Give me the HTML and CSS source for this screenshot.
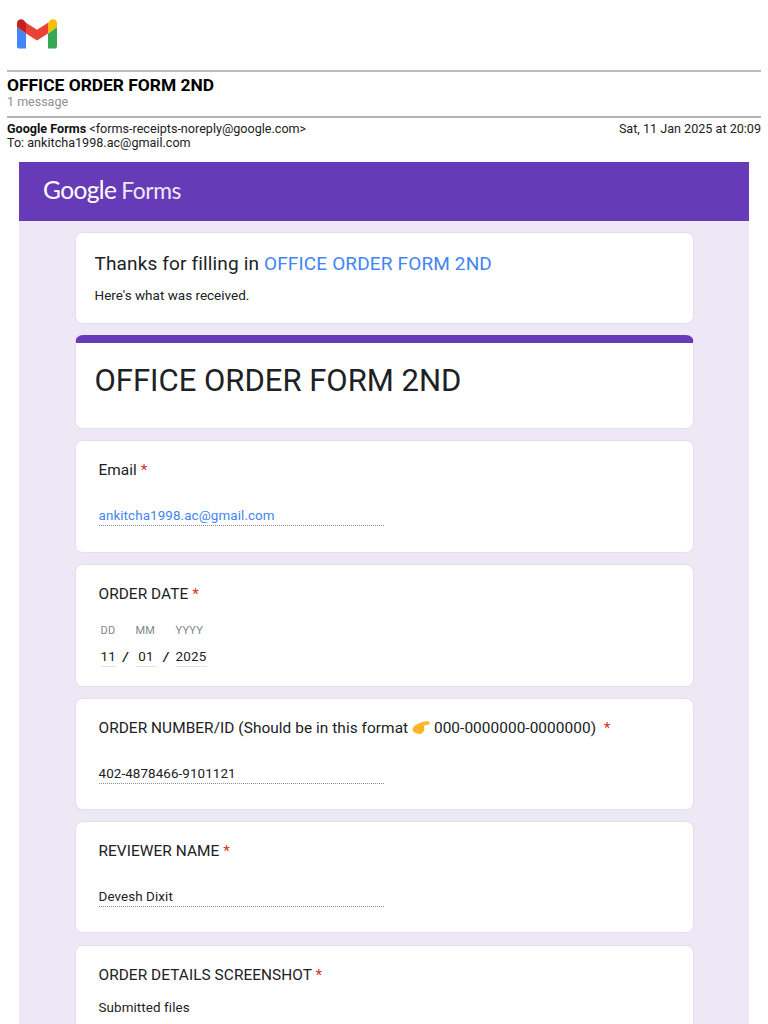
FILE: index.html
```html
<!DOCTYPE html>
<html lang="en">
<head>
<meta charset="utf-8">
<title>OFFICE ORDER FORM 2ND</title>
<link rel="stylesheet" href="styles.css">
</head>
<body>
<header class="mail-head">
  <svg class="gmail" viewBox="0 0 40 30" width="40" height="30" aria-hidden="true">
    <path fill="#4285f4" d="M0 8v19a2.6 2.6 0 0 0 2.6 2.6H9V14.500z"/>
    <path fill="#34a853" d="M31 14.500v15.100h6.400A2.600 2.600 0 0 0 40 27V8z"/>
    <path fill="#fbbc04" d="M31 3.800v10.700l9-6.500V4.200C40 .8 36.200-1 33.500 1z"/>
    <path fill="#ea4335" d="M9 14.500V3.800l11 7L31 3.800v10.700l-11 7z"/>
    <path fill="#c5221f" d="M0 4.200V8l9 6.500V3.800L6.500 1C3.800-1 0 .8 0 4.200z"/>
  </svg>
  <hr class="rule">
  <h1 class="subject">OFFICE ORDER FORM 2ND</h1>
  <div class="count">1 message</div>
  <hr class="rule rule-thin">
  <div class="meta">
    <div><b>Google Forms</b> &lt;forms-receipts-noreply@google.com&gt;<br>To: ankitcha1998.ac@gmail.com</div>
    <div>Sat, 11 Jan 2025 at 20:09</div>
  </div>
</header>
<main class="sheet">
  <div class="banner"><span class="logo-g">Google</span><span class="logo-f">Forms</span></div>
  <div class="stack">
    <section class="card thanks">
      <div class="thanks-title">Thanks for filling in <a class="link">OFFICE ORDER FORM 2ND</a></div>
      <p class="thanks-sub">Here's what was received.</p>
    </section>
    <section class="card title-card">
      <h2 class="form-title">OFFICE ORDER FORM 2ND</h2>
    </section>
    <section class="card q">
      <div class="label">Email <span class="req">*</span></div>
      <div class="answer link-answer">ankitcha1998.ac@gmail.com</div>
    </section>
    <section class="card q q-date">
      <div class="label">ORDER DATE <span class="req">*</span></div>
      <div class="date">
        <div class="part p-dd"><span class="cap">DD</span><span class="val">11</span></div>
        <span class="slash slash-a">/</span>
        <div class="part p-mm"><span class="cap">MM</span><span class="val">01</span></div>
        <span class="slash">/</span>
        <div class="part p-yy"><span class="cap">YYYY</span><span class="val">2025</span></div>
      </div>
    </section>
    <section class="card q">
      <div class="label">ORDER NUMBER/ID (Should be in this format
        <svg class="hand" viewBox="0 0 18 16" width="18" height="16" aria-hidden="true">
          <path fill="#fbb726" d="M.3 9C1.500 6.500 3.500 4.800 6 3.800L9.500 2.300c2.500-.8 5.300-1.100 7.200-.9 1.200.2 1.200 2.900 0 3.100-1.800.2-3.500.5-4.900 1 .5.800.6 1.700.4 2.500.4.800.3 1.600-.2 2.200 0 .9-.5 1.500-1.200 1.800-.3 1-1 1.600-2 1.800-1.800.3-3.700.1-5-.7L1.500 12z"/>
          <path fill="#f0a01a" d="M6 8c1.800-.6 3.700-.8 5.800-.5l.2.700c-2-.3-3.900-.1-5.600.4zM7 10.700l4.300-.2v.5l-4.300.3z"/>
        </svg>
        000-0000000-0000000)&nbsp; <span class="req">*</span></div>
      <div class="answer">402-4878466-9101121</div>
    </section>
    <section class="card q">
      <div class="label">REVIEWER NAME <span class="req">*</span></div>
      <div class="answer">Devesh Dixit</div>
    </section>
    <section class="card q q-files">
      <div class="label">ORDER DETAILS SCREENSHOT <span class="req">*</span></div>
      <div class="files">Submitted files</div>
    </section>
  </div>
</main>
</body>
</html>
```
FILE: styles.css
```css
html, body {
  margin: 0;
  height: 1024px;
  overflow: hidden;
  background: #fff;
}
body {
  font-family: Roboto, "Liberation Sans", sans-serif;
  color: #202124;
}
.mail-head {
  padding: 19px 7px 0;
}
.gmail {
  display: block;
  margin-left: 10px;
}
.rule {
  border: 0;
  height: 2px;
  margin: 21px 0 0;
  background: #bdbdbd;
}
.rule-thin {
  margin-top: 7px;
  height: 1.500px;
  background: #b4b4b4;
}
.subject {
  margin: 4px 0 0;
  font-size: 17.400px;
  line-height: 18px;
  font-weight: 700;
  color: #000;
}
.count {
  margin-top: 1px;
  font-size: 12.500px;
  line-height: 14px;
  color: #8f8f8f;
}
.meta {
  display: flex;
  justify-content: space-between;
  margin-top: 4.500px;
  font-size: 12.600px;
  line-height: 14px;
  color: #222;
}
.meta b {
  color: #111;
}
.sheet {
  margin: 11.500px 19px 0;
  background: #ede7f6;
  height: 900px;
}
.banner {
  height: 59px;
  background: #673ab7;
  color: #fff;
  display: flex;
  align-items: center;
  padding-left: 24px;
  padding-bottom: 3px;
  box-sizing: border-box;
}
.logo-g {
  font-family: Lato, sans-serif;
  font-size: 24.500px;
  font-weight: 400;
  letter-spacing: -.6px;
  margin-right: 5px;
}
.logo-f {
  font-family: Lato, sans-serif;
  font-size: 22.800px;
  font-weight: 400;
  color: #efe9f8;
  letter-spacing: -.4px;
}
.stack {
  width: 619px;
  margin: 0 auto;
  padding-top: 11px;
  display: flex;
  flex-direction: column;
  gap: 11.200px;
}
.card {
  box-sizing: border-box;
  background: #fff;
  border: 1px solid #e3dfec;
  border-radius: 8px;
  padding: 0 19px;
}
.thanks {
  height: 92px;
  padding-top: 19px;
}
.thanks-title {
  font-size: 19px;
  line-height: 24px;
  letter-spacing: .15px;
}
.link {
  color: #4285f4;
}
.thanks-sub {
  margin: 11px 0 0;
  font-size: 13.500px;
  line-height: 16px;
}
.title-card {
  height: 94.600px;
  border-top: 8px solid #673ab7;
  padding-top: 18px;
}
.form-title {
  margin: 0;
  font-size: 31px;
  line-height: 40px;
  font-weight: 400;
}
.q {
  height: 112.200px;
  padding: 19px 23px 0;
}
.label {
  font-size: 15.400px;
  line-height: 20px;
  letter-spacing: .06px;
}
.req {
  color: #d93025;
}
.hand {
  vertical-align: -3px;
}
.answer {
  width: 285px;
  margin-top: 27px;
  font-size: 13.400px;
  line-height: 18px;
  letter-spacing: .1px;
  border-bottom: 1px dotted #8a8f94;
}
.link-answer {
  color: #4285f4;
}
.q-date {
  height: 122.800px;
}
.date {
  display: flex;
  align-items: flex-end;
  margin-top: 20px;
  font-size: 13.400px;
}
.part {
  display: flex;
  flex-direction: column;
}
.p-dd { width: 15px; margin-left: 2px; }
.p-mm { width: 21px; }
.p-yy { width: 31px; }
.cap {
  font-size: 11px;
  line-height: 14px;
  color: #80868b;
  white-space: nowrap;
  letter-spacing: .2px;
}
.val {
  margin-top: 10px;
  line-height: 18px;
  border-bottom: 1px solid #e0e0e0;
  letter-spacing: .2px;
  text-align: center;
  white-space: nowrap;
}
.p-yy .val, .p-yy .cap { text-align: left; }
.slash {
  width: 19px;
  text-align: center;
  font-weight: 700;
  line-height: 21px;
  font-style: italic;
}
.slash-a {
  width: 20px;
}
.q-files {
  height: 120px;
}
.files {
  margin-top: 14px;
  font-size: 13.400px;
  line-height: 18px;
  letter-spacing: .1px;
}
```
